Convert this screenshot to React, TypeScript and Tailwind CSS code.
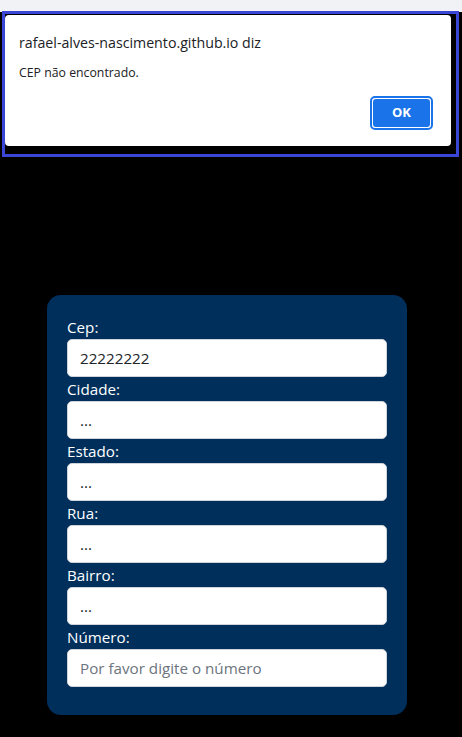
import React from "react";

const fields = [
  { label: "Cep:", value: "22222222", placeholder: "" },
  { label: "Cidade:", value: "...", placeholder: "" },
  { label: "Estado:", value: "...", placeholder: "" },
  { label: "Rua:", value: "...", placeholder: "" },
  { label: "Bairro:", value: "...", placeholder: "" },
  { label: "Número:", value: "", placeholder: "Por favor digite o número" },
];

export default function App() {
  return (
    <div
      className="relative w-[462px] h-[737px] bg-black overflow-hidden"
      style={{ fontFamily: '"Open Sans", "Noto Sans", sans-serif' }}
    >
      <div className="h-[12px] bg-[#f1f2f6]" />

      {/* alert dialog */}
      <div className="absolute left-[2px] top-[11px] w-[457px] h-[146px] border-[3px] border-[#3b47d4] bg-black">
        <div className="mt-[1px] w-[446px] h-[131px] bg-white rounded-[4px] px-[14px] pt-[18px]">
          <div className="text-[14.2px] leading-[20px] text-[#202124]">
            rafael-alves-nascimento.github.io diz
          </div>
          <div className="mt-[12px] text-[12.3px] leading-[16px] text-[#202124]">
            CEP não encontrado.
          </div>
          <div className="flex justify-end mt-[15px] pr-[4px]">
            <button className="w-[63px] h-[34px] rounded-[5px] border-2 border-[#1a73e8] p-[1px] bg-white">
              <span className="flex items-center justify-center w-full h-full rounded-[3px] bg-[#1a73e8] text-white text-[13px] font-bold">
                OK
              </span>
            </button>
          </div>
        </div>
      </div>

      {/* card */}
      <div className="mt-[283px] ml-[47px] w-[360px] rounded-[14px] bg-[#002f5b] px-[20px] pt-[20px] pb-[28px]">
        {fields.map((f) => (
          <div key={f.label}>
            <label className="block h-[24px] text-[15.2px] leading-[24px] text-white">
              {f.label}
            </label>
            <input
              readOnly
              value={f.value}
              placeholder={f.placeholder}
              className="block w-[320px] h-[38px] rounded-[5px] border border-[#ced4da] bg-white px-[12px] text-[15.2px] text-[#212529] placeholder:text-[#6c757d] outline-none"
              style={{ fontFamily: '"Open Sans", "Noto Sans", sans-serif' }}
            />
          </div>
        ))}
      </div>
    </div>
  );
}
